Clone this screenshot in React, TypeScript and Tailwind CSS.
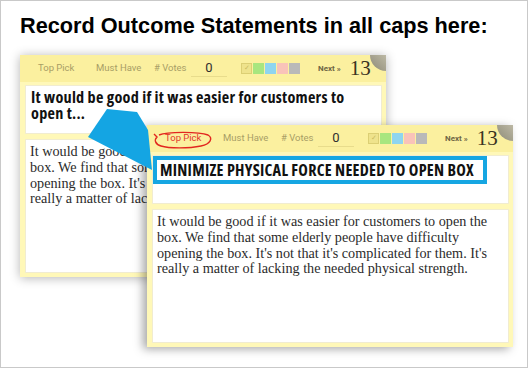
import React from "react";

const bodyLines = [
  "It would be good if it was easier for customers to open the",
  "box. We find that some elderly people have difficulty",
  "opening the box. It's not that it's complicated for them. It's",
  "really a matter of lacking the needed physical strength.",
];

const swatches = ["bg-[#a8e67f]", "bg-[#8fd5ef]", "bg-[#f9c3b9]", "bg-[#b9b9b9]"];

function Curl() {
  return (
    <svg className="absolute right-0 top-0" width="17" height="17" viewBox="0 0 17 17">
      <defs>
        <linearGradient id="curlg" x1="0" y1="1" x2="1" y2="0">
          <stop offset="0" stopColor="#8d8a77" />
          <stop offset="1" stopColor="#bcb8a4" />
        </linearGradient>
      </defs>
      <path d="M17 0 H1 A16 16 0 0 0 17 16 Z" fill="url(#curlg)" />
    </svg>
  );
}

function CardHeader({ front }: { front?: boolean }) {
  return (
    <div className="relative flex h-[27px] items-center bg-[#fbf09f] font-['Roboto',sans-serif] text-[9.5px] text-[#a89e66]">
      <span className={`ml-[18px] w-[58px] ${front ? "text-[#e2372c]" : ""}`}>Top Pick</span>
      <span className="w-[58px]">Must Have</span>
      <span className="w-[37px]"># Votes</span>
      <span className="w-[36px] border-b border-[#e8dc8c] pb-[1px] text-center text-[13px] leading-[15px] text-[#2f2f2f]">
        0
      </span>
      <div className="ml-[14px] flex gap-[1px]">
        <div className="flex h-[11px] w-[11px] items-center justify-center border border-[#dccf74] bg-[#efe38c] text-[7px] leading-none text-[#c9bb62]">
          ✓
        </div>
        {swatches.map((c) => (
          <div key={c} className={`h-[11px] w-[11px] ${c}`} />
        ))}
      </div>
      <span className="ml-[18px] text-[8px] font-bold text-[#6f6644]">Next »</span>
      <span className="ml-[9px] font-['Liberation_Serif',serif] text-[21px] leading-none text-[#3a3322]">13</span>
      <Curl />
      {front && (
        <svg className="absolute left-[6px] top-[6px]" width="60" height="18" viewBox="0 0 60 18">
          <path
            d="M6 4 C14 0.5 46 0.5 55 4 C60 7 58 13 48 15 C36 17.5 16 17.5 8 15 C2 13 1 9 4 6 C3 5 2 4 1 3"
            fill="none"
            stroke="#e2271f"
            strokeWidth="1.4"
          />
        </svg>
      )}
    </div>
  );
}

function Card({ front }: { front?: boolean }) {
  return (
    <div
      className={`flex h-[222px] w-[366px] flex-col bg-[#fff8b8] ${
        front
          ? "shadow-[-4px_2px_9px_rgba(0,0,0,0.35)]"
          : "shadow-[0_1px_10px_rgba(0,0,0,0.3)]"
      }`}
    >
      <CardHeader front={front} />
      <div className="mt-[3px] ml-[5px] mr-[4px] h-[49px] border border-[#f1ecd0] bg-white">
        {front ? (
          <div className="flex h-[28px] w-[334px] items-center whitespace-nowrap border-[4px] border-[#16a6e2] bg-white pl-[3px] font-['Open_Sans',sans-serif] font-stretch-condensed text-[16.2px] font-bold tracking-[0.25px] text-[#111]">
            MINIMIZE PHYSICAL FORCE NEEDED TO OPEN BOX
          </div>
        ) : (
          <p className="whitespace-nowrap px-[5px] pt-[3px] font-['Open_Sans',sans-serif] font-stretch-condensed text-[16.2px] font-bold leading-[16px] tracking-[0.25px] text-[#111]">
            It would be good if it was easier for customers to
            <br />
            open t...
          </p>
        )}
      </div>
      <div className="mt-[5px] ml-[5px] mr-[4px] h-[134px] overflow-hidden border border-[#f1ecd0] bg-white px-[4px] pt-[4px] font-['Liberation_Serif',serif] text-[14.2px] leading-[15.8px] text-[#2b2b2b]">
        {bodyLines.map((l) => (
          <div key={l} className="whitespace-nowrap">
            {l}
          </div>
        ))}
      </div>
    </div>
  );
}

export default function App() {
  return (
    <div className="relative h-[368px] w-[528px] overflow-hidden border border-[#c9c9c9] bg-white">
      <h1 className="pl-[19px] pt-[12px] font-['Liberation_Sans',Arial,sans-serif] text-[21.7px] font-bold leading-[25px] text-black">
        Record Outcome Statements in all caps here:
      </h1>
      <div className="ml-[19px] mt-[17px]">
        <Card />
      </div>
      <div className="absolute left-[146px] top-[124px]">
        <Card front />
      </div>
      <svg className="absolute left-0 top-0" width="526" height="366" viewBox="1 1 526 366">
        <polygon points="107,109 137,112 148,130 152,170 88,137" fill="#14a5e3" />
      </svg>
    </div>
  );
}
